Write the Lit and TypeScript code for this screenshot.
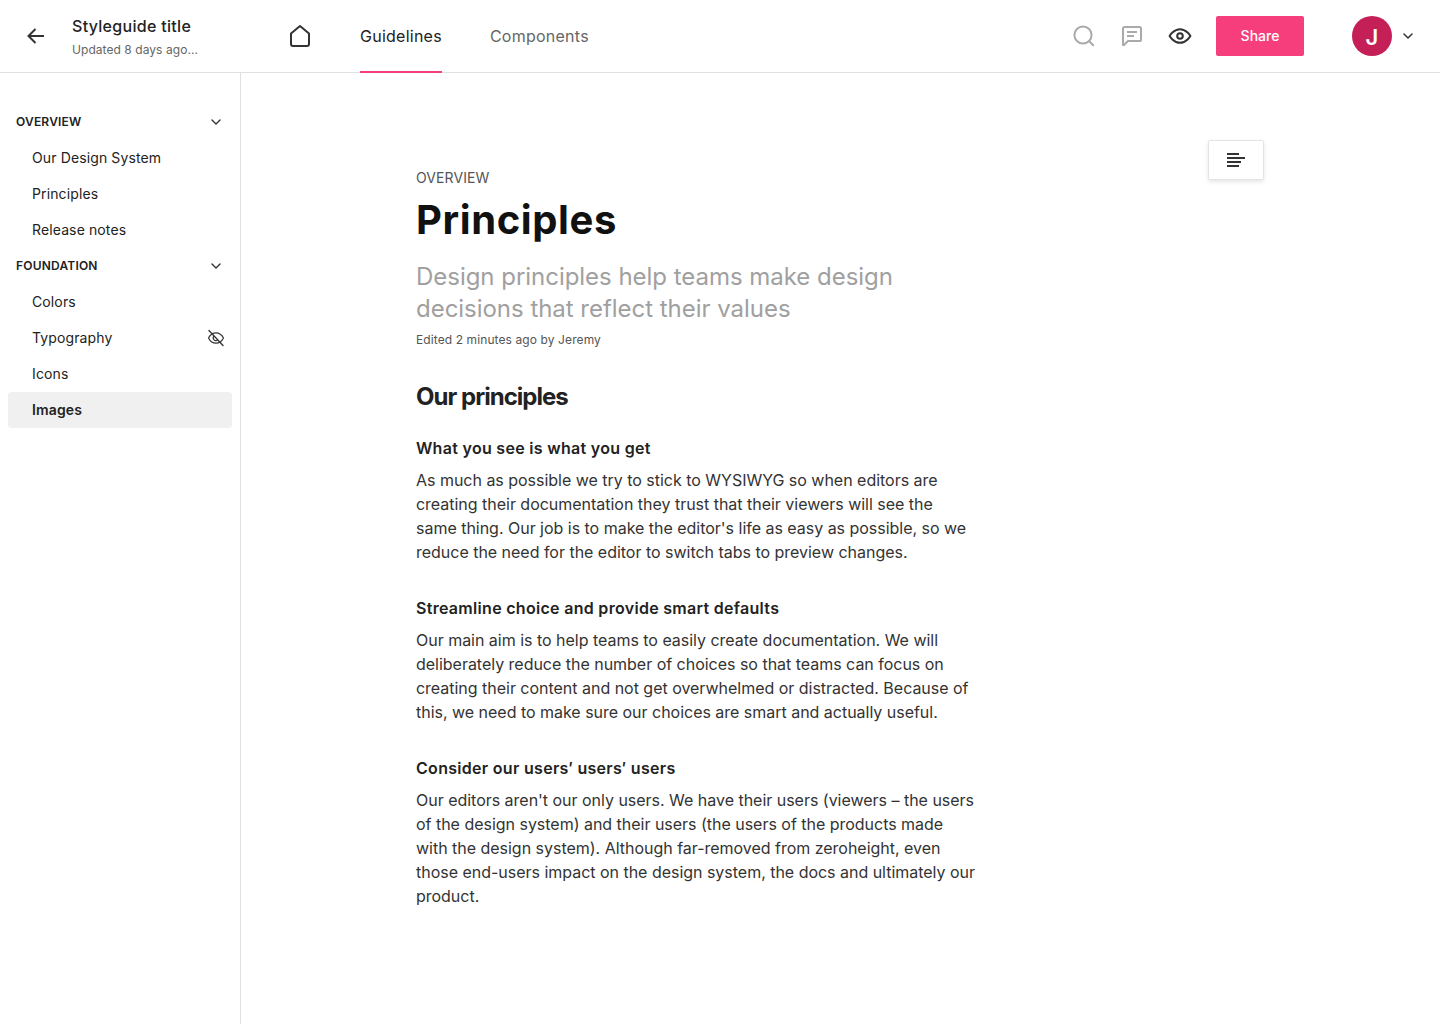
import { LitElement, html, css, svg } from "lit";
import { customElement } from "lit/decorators.js";

const chevron = html`<svg class="chev" width="16" height="16" viewBox="0 0 16 16" fill="none"><path d="M4 6l4 4 4-4" stroke="#333" stroke-width="1.4" stroke-linecap="round" stroke-linejoin="round"/></svg>`;

const sections = [
  { title: "OVERVIEW", items: ["Our Design System", "Principles", "Release notes"] },
  { title: "FOUNDATION", items: ["Colors", "Typography", "Icons", "Images"] },
];

const paragraphs = [
  {
    h: "What you see is what you get",
    lines: [
      "As much as possible we try to stick to WYSIWYG so when editors are",
      "creating their documentation they trust that their viewers will see the",
      "same thing. Our job is to make the editor's life as easy as possible, so we",
      "reduce the need for the editor to switch tabs to preview changes.",
    ],
  },
  {
    h: "Streamline choice and provide smart defaults",
    lines: [
      "Our main aim is to help teams to easily create documentation. We will",
      "deliberately reduce the number of choices so that teams can focus on",
      "creating their content and not get overwhelmed or distracted. Because of",
      "this, we need to make sure our choices are smart and actually useful.",
    ],
  },
  {
    h: "Consider our users\u2032 users\u2032 users",
    lines: [
      "Our editors aren't our only users. We have their users (viewers \u2013 the users",
      "of the design system) and their users (the users of the products made",
      "with the design system). Although far-removed from zeroheight, even",
      "those end-users impact on the design system, the docs and ultimately our",
      "product.",
    ],
  },
];

@customElement("app-root")
export class AppRoot extends LitElement {
  static styles = css`
    :host { display: block; width: 1440px; height: 1024px; background: #fff; overflow: hidden;
      font-family: Inter, "Liberation Sans", sans-serif; color: #222; -webkit-font-smoothing: antialiased; }
    * { box-sizing: border-box; }
    header { height: 73px; border-bottom: 1px solid #e0e0e0; display: flex; align-items: center; }
    .back { width: 24px; height: 24px; margin-left: 24px; display: block; flex: none; }
    .titles { margin-left: 24px; width: 216px; flex: none; }
    .title { font-size: 16px; line-height: 24px; font-weight: 500; color: #222; letter-spacing: 0.3px; }
    .updated { font-size: 12px; line-height: 16px; color: #666; margin-top: 4px; letter-spacing: 0.06px; }
    .home { width: 24px; height: 24px; display: block; margin-right: 48px; flex: none; }
    nav { display: flex; gap: 48px; height: 72px; }
    nav a { font-size: 16px; line-height: 72px; color: #666; height: 73px; letter-spacing: 0.25px; }
    nav a.on { color: #222; border-bottom: 2px solid #f73e7c; }
    .right { margin-left: auto; display: flex; align-items: center; }
    .ico { width: 24px; height: 24px; display: block; margin-right: 24px; }
    .share { width: 88px; height: 40px; background: #f73e7c; color: #fff; border-radius: 2px; font-size: 14px;
      display: flex; align-items: center; justify-content: center; font-weight: 500; margin-right: 48px; padding: 0 0 2px 0; }
    .avatar { width: 40px; height: 40px; border-radius: 50%; background: #c41f57; color: #fff; font-weight: 600;
      font-size: 22px; display: flex; align-items: center; justify-content: center; padding-top: 1px; }
    .avatar-chev { margin: 0 24px 0 8px; display: block; }
    .body { display: flex; height: 951px; }
    aside { width: 241px; flex: none; border-right: 1px solid #e0e0e0; padding: 31px 8px 0; }
    .sec, .item { display: flex; align-items: center; justify-content: space-between; height: 36px; }
    .sec span, .item span { margin-bottom: 2px; }
    .sec { padding: 0 8px; font-size: 12px; font-weight: 600; color: #222; letter-spacing: 0.2px; }
    .item { padding: 0 8px 0 24px; font-size: 14px; color: #222; border-radius: 4px; letter-spacing: 0.12px; }
    .item.on { background: #f0f0f0; font-weight: 600; }
    .chev { display: block; }
    main { flex: 1; position: relative; padding: 95px 0 0 175px; }
    .toc { position: absolute; top: 67px; left: 967px; width: 56px; height: 40px; background: #fff; border: 1px solid #e4e4e4;
      border-radius: 2px; box-shadow: 0 2px 4px rgba(0,0,0,.1); display: flex; align-items: center; justify-content: center; }
    .eyebrow { font-size: 14px; line-height: 20px; color: #555; letter-spacing: 0.1px; }
    h1 { margin: 8px 0 0; font-size: 40px; line-height: 48px; font-weight: 700; color: #111; letter-spacing: 0.6px; }
    .lead { margin-top: 17px; font-size: 24px; line-height: 32px; color: #a0a0a0; letter-spacing: -0.03px; font-weight: 400; }
    .edited { margin-top: 5px; font-size: 12px; line-height: 20px; color: #555; letter-spacing: 0.1px; }
    h2 { margin: 31px 0 0; font-size: 24px; line-height: 32px; font-weight: 700; color: #222; letter-spacing: -0.97px; }
    .para { margin-top: 23px; }
    .para + .para { margin-top: 32px; }
    h3 { margin: 0; font-size: 16px; line-height: 24px; font-weight: 600; color: #222; letter-spacing: 0.3px; }
    p { margin: 8px 0 0; font-size: 16px; line-height: 24px; color: #333; white-space: nowrap; letter-spacing: -0.02px; }
  `;

  render() {
    return html`
      <header>
        <svg class="back" viewBox="0 0 24 24" fill="none"><path d="M20 12H5M11.5 5l-7 7 7 7" stroke="#333" stroke-width="2" stroke-linejoin="miter"/></svg>
        <div class="titles">
          <div class="title">Styleguide title</div>
          <div class="updated">Updated 8 days ago...</div>
        </div>
        <svg class="home" viewBox="0 0 24 24" fill="none"><path d="M3 9.5 12 2l9 7.5V20a2 2 0 0 1-2 2H5a2 2 0 0 1-2-2z" stroke="#333" stroke-width="2" stroke-linejoin="round"/></svg>
        <nav><a class="on">Guidelines</a><a>Components</a></nav>
        <div class="right">
          <svg class="ico" viewBox="0 0 24 24" fill="none"><circle cx="11" cy="11" r="8.6" stroke="#aaa" stroke-width="2"/><path d="M17.2 17.2l4 4" stroke="#aaa" stroke-width="2" stroke-linecap="round"/></svg>
          <svg class="ico" viewBox="0 0 24 24" fill="none"><path d="M3 4.6A1.6 1.6 0 0 1 4.6 3h14.8A1.6 1.6 0 0 1 21 4.6v10.8a1.6 1.6 0 0 1-1.6 1.6H8l-4 4H3z" stroke="#aaa" stroke-width="2" stroke-linejoin="round"/><path d="M7 8h10M7 12h7" stroke="#aaa" stroke-width="2"/></svg>
          <svg class="ico" viewBox="0 0 24 24" fill="none"><path d="M1.6 12S5.6 5.2 12 5.2 22.4 12 22.4 12 18.4 18.8 12 18.8 1.6 12 1.6 12z" stroke="#333" stroke-width="2" stroke-linejoin="round"/><circle cx="12" cy="12" r="2.8" stroke="#333" stroke-width="2"/></svg>
          <div class="share">Share</div>
          <div class="avatar">J</div>
          <svg class="avatar-chev" width="16" height="16" viewBox="0 0 16 16" fill="none"><path d="M4 6l4 4 4-4" stroke="#333" stroke-width="1.5" stroke-linecap="round" stroke-linejoin="round"/></svg>
        </div>
      </header>
      <div class="body">
        <aside>
          ${sections.map(
            (s) => html`
              <div class="sec"><span>${s.title}</span>${chevron}</div>
              ${s.items.map(
                (i) => html`<div class="item ${i === "Images" ? "on" : ""}"><span>${i}</span>${i === "Typography"
                  ? html`<svg width="18" height="18" viewBox="0 0 18 18" fill="none" style="margin-right:-1px">
                      ${svg`<path d="M1.5 9S4.2 3.8 9 3.8 16.5 9 16.5 9 13.8 14.2 9 14.2 1.5 9 1.5 9z" stroke="#333" stroke-width="1.2"/><path d="M7 7.2a2.4 2.4 0 0 0 3.6 3.6" stroke="#333" stroke-width="1.2"/><path d="M2 1.5l14 15" stroke="#333" stroke-width="1.3" stroke-linecap="round"/>`}
                    </svg>`
                  : ""}</div>`
              )}
            `
          )}
        </aside>
        <main>
          <div class="toc">
            <svg width="18" height="14" viewBox="0 0 18 14"><path d="M0 1h12M0 5h18M0 9h14M0 13h12" stroke="#333" stroke-width="2"/></svg>
          </div>
          <div class="eyebrow">OVERVIEW</div>
          <h1>Principles</h1>
          <div class="lead">Design principles help teams make design<br />decisions that reflect their values</div>
          <div class="edited">Edited 2 minutes ago by Jeremy</div>
          <h2>Our principles</h2>
          ${paragraphs.map(
            (p) => html`<section class="para"><h3>${p.h}</h3><p>${p.lines.map((l, i) => html`${i ? html`<br />` : ""}${l}`)}</p></section>`
          )}
        </main>
      </div>
    `;
  }
}
